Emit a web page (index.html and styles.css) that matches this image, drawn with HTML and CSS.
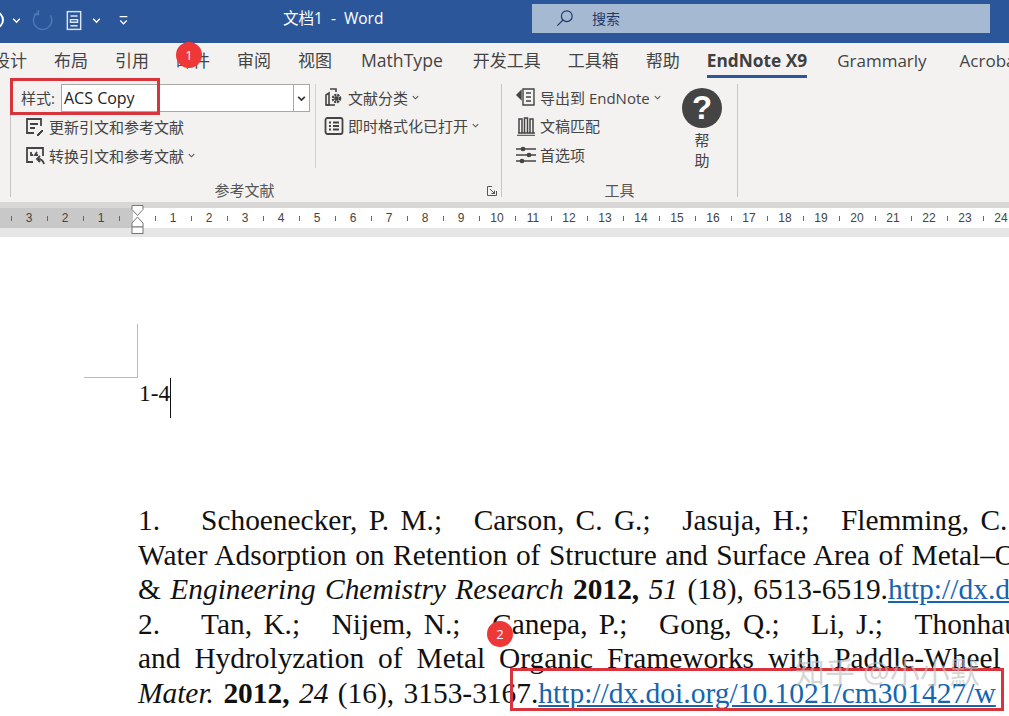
FILE: index.html
```html
<!DOCTYPE html>
<html lang="en">
<head>
    <meta charset="UTF-8">
    <title>文档1 - Word</title>
    <link rel="stylesheet" href="styles.css">
</head>
<body>
    <div class="titlebar">
        <div class="quick">
            <svg class="q-undo" viewBox="0 0 24 24" fill="none" stroke="#fff" stroke-width="2"><circle cx="3" cy="12" r="8"/></svg>
            <svg class="q-chev" viewBox="0 0 10 10" fill="none" stroke="#fff" stroke-width="1.3"><path d="M2 3.5l3 3 3-3"/></svg>
            <svg class="q-redo" viewBox="0 0 24 24" fill="none" stroke="#4f77b3" stroke-width="1.6"><path d="M7 3.5A10 10 0 1 0 20 7"/><path d="M7 1v5H2"/></svg>
            <svg class="q-page" viewBox="0 0 18 22" fill="none" stroke="#dbe5f3" stroke-width="1.6"><rect x="1.5" y="1" width="15" height="20"/><path d="M5 6h8M5 10h8v3H5zM5 17h8"/></svg>
            <svg class="q-chev q-chev-page" viewBox="0 0 10 10" fill="none" stroke="#fff" stroke-width="1.3"><path d="M2 3.5l3 3 3-3"/></svg>
            <svg class="q-more" viewBox="0 0 10 10" fill="none" stroke="#fff" stroke-width="1.1"><path d="M1.5 1.5h7M2 5l3 3 3-3"/></svg>
        </div>
        <div class="doc-title">文档1&nbsp; -&nbsp; Word</div>
        <div class="search">
            <svg class="search-icon" viewBox="0 0 20 20" fill="none" stroke="#1f3a68" stroke-width="1.3"><circle cx="12" cy="8" r="6"/><path d="M7.5 12.5L1.5 18.5"/></svg>
            <span>搜索</span>
        </div>
    </div>

    <div class="tabs">
        <span class="tab first">设计</span>
        <span class="tab">布局</span>
        <span class="tab">引用</span>
        <span class="tab">邮件</span>
        <span class="tab">审阅</span>
        <span class="tab">视图</span>
        <span class="tab mathtype">MathType</span>
        <span class="tab dev">开发工具</span>
        <span class="tab">工具箱</span>
        <span class="tab">帮助</span>
        <span class="tab active">EndNote X9</span>
        <span class="tab grammarly">Grammarly</span>
        <span class="tab acrobat">Acrobat</span>
    </div>

    <div class="ribbon">
        <div class="group refs">
            <div class="group-body">
                <div class="col col-style">
                    <div class="style-row">
                        <span class="style-label">样式:</span>
                        <div class="style-select">
                            <span class="style-value">ACS Copy</span>
                            <span class="style-arrow">
                                <svg viewBox="0 0 10 10" fill="none" stroke="#333" stroke-width="1.5"><path d="M2 3.5l3 3 3-3"/></svg>
                            </span>
                        </div>
                    </div>
                    <div class="cmd indent">
                        <svg class="icon" viewBox="0 0 20 20" fill="none" stroke="#444" stroke-width="1.8"><path d="M16 9V2H2v14h7"/><path d="M5 7h8M5 11h5"/><path d="M12 18l5-5 1 1-5 5z" fill="#444" stroke-width="1"/></svg>
                        <span>更新引文和参考文献</span>
                    </div>
                    <div class="cmd indent">
                        <svg class="icon" viewBox="0 0 20 20" fill="none" stroke="#444" stroke-width="1.8"><path d="M8 16H2V2h16v8"/><path d="M6 6v3h2M12 6l-2 3h3"/><path d="M19 18c-1-4-3-5-6-5M15 10l-3 3 3 3"/></svg>
                        <span>转换引文和参考文献</span>
                        <svg class="chev" viewBox="0 0 10 10" fill="none" stroke="#555" stroke-width="1.2"><path d="M2 3.5l3 3 3-3"/></svg>
                    </div>
                </div>
                <div class="col col-format">
                    <div class="cmd">
                        <svg class="icon" viewBox="0 0 20 20" fill="none" stroke="#444" stroke-width="1.6"><path d="M2 18V8l3-2v12zM6 2h6v3"/><circle cx="12.500" cy="11.500" r="3.500" stroke-width="2.600" stroke-dasharray="2 .8"/><circle cx="12.500" cy="11.500" r="1.400" fill="#444"/><path d="M2 18h9"/></svg>
                        <span>文献分类</span>
                        <svg class="chev" viewBox="0 0 10 10" fill="none" stroke="#555" stroke-width="1.2"><path d="M2 3.5l3 3 3-3"/></svg>
                    </div>
                    <div class="cmd">
                        <svg class="icon" viewBox="0 0 20 20" fill="none" stroke="#444" stroke-width="1.8"><rect x="1.5" y="2" width="17" height="16" rx="2"/><path d="M5 6.500h2M5 10h2M5 13.500h2M9 6.500h6M9 10h6M9 13.500h6"/></svg>
                        <span>即时格式化已打开</span>
                        <svg class="chev" viewBox="0 0 10 10" fill="none" stroke="#555" stroke-width="1.2"><path d="M2 3.5l3 3 3-3"/></svg>
                    </div>
                </div>
            </div>
            <div class="group-label">参考文献</div>
            <svg class="launcher" viewBox="0 0 10 10" fill="none" stroke="#555" stroke-width="1"><path d="M9.500 5v4.500H.5V.5H5M3 3l4.500 4.500M7.500 4.500v3h-3"/></svg>
        </div>

        <div class="group tools">
            <div class="group-body">
                <div class="col col-tools">
                    <div class="cmd">
                        <svg class="icon" viewBox="0 0 20 20" fill="none" stroke="#444" stroke-width="1.4"><path d="M7 2h11v16H7zM10 6h5M10 10h5M10 14h5"/><path d="M1 8l4-4v8z" fill="#444"/></svg>
                        <span>导出到 EndNote</span>
                        <svg class="chev" viewBox="0 0 10 10" fill="none" stroke="#555" stroke-width="1.2"><path d="M2 3.5l3 3 3-3"/></svg>
                    </div>
                    <div class="cmd">
                        <svg class="icon" viewBox="0 0 20 20" fill="none" stroke="#444" stroke-width="1.5"><path d="M2 17h17M3 17V3h3v14M8.500 17V2h3v15M14 17V3h3v14"/><path d="M1 19.300h18" stroke-width="1"/></svg>
                        <span>文稿匹配</span>
                    </div>
                    <div class="cmd">
                        <svg class="icon" viewBox="0 0 20 20" fill="none" stroke="#444" stroke-width="1.5"><path d="M0 4h20M0 10h20M0 16h20"/><circle cx="7" cy="4" r="1.6" fill="#444"/><circle cx="13" cy="10" r="1.6" fill="#444"/><circle cx="6" cy="16" r="1.6" fill="#444"/></svg>
                        <span>首选项</span>
                    </div>
                </div>
                <div class="help">
                    <div class="help-icon">?</div>
                    <div class="help-text">帮<br>助</div>
                </div>
            </div>
            <div class="group-label">工具</div>
        </div>
    </div>

    <div class="ruler-wrap">
        <div class="ruler">
            <span class="mark">3</span><span class="mark">2</span><span class="mark">1</span><span class="mark"></span>
            <span class="mark">1</span><span class="mark">2</span><span class="mark">3</span><span class="mark">4</span>
            <span class="mark">5</span><span class="mark">6</span><span class="mark">7</span><span class="mark">8</span>
            <span class="mark">9</span><span class="mark">10</span><span class="mark">11</span><span class="mark">12</span>
            <span class="mark">13</span><span class="mark">14</span><span class="mark">15</span><span class="mark">16</span>
            <span class="mark">17</span><span class="mark">18</span><span class="mark">19</span><span class="mark">20</span>
            <span class="mark">21</span><span class="mark">22</span><span class="mark">23</span><span class="mark">24</span>
        </div>
        <svg class="indent-marker" viewBox="0 0 13 32" fill="#fff" stroke="#777" stroke-width="1"><path d="M1 3.500h11v4l-5.500 6-5.500-6z"/><path d="M6.500 15l5.500 6v4H1v-4z"/><rect x="1" y="25" width="11" height="6.500"/></svg>
    </div>

    <div class="page">
        <div class="crop-mark"></div>
        <p class="typed">1-4<span class="cursor"></span></p>
        <div class="refs-list">
            <div class="line ws-names">1.<span class="gap-num"></span>Schoenecker, P. M.;<span class="gap"></span>Carson, C. G.;<span class="gap"></span>Jasuja, H.;<span class="gap"></span>Flemming, C.</div>
            <div class="line ws-plain">Water Adsorption on Retention of Structure and Surface Area of Metal–Organic</div>
            <div class="line ws-cite">&amp; <i>Engineering Chemistry Research</i> <b>2012,</b> <i>51</i> (18), 6513-6519.<a class="link">http://dx.doi.org</a></div>
            <div class="line ws-names">2.<span class="gap-num"></span>Tan, K.;<span class="gap"></span>Nijem, N.;<span class="gap"></span>Canepa, P.;<span class="gap"></span>Gong, Q.;<span class="gap"></span>Li, J.;<span class="gap"></span>Thonhauser</div>
            <div class="line ws-wide">and Hydrolyzation of Metal Organic Frameworks with Paddle-Wheel</div>
            <div class="line ws-cite"><i>Mater.</i> <b>2012,</b> <i>24</i> (16), 3153-3167.<a class="link">http://dx.doi.org/10.1021/cm301427/w</a></div>
        </div>
    </div>

    <div class="badge badge-one">1</div>
    <div class="badge badge-two">2</div>
    <div class="red-box box-style"></div>
    <div class="red-box box-link"></div>
    <div class="watermark">知乎 @小小默</div>
</body>
</html>
```

FILE: styles.css
```css
* {
    margin: 0;
    padding: 0;
    box-sizing: border-box;
}
html, body {
    width: 1009px;
    height: 716px;
    overflow: hidden;
}
body {
    position: relative;
    background: #fff;
    font-family: 'Open Sans', 'Noto Sans CJK SC', sans-serif;
    color: #444;
}

/* title bar */
.titlebar {
    height: 43px;
    background: #2b579a;
    display: flex;
    align-items: center;
    color: #fff;
}
.quick {
    width: 283px;
    display: flex;
    align-items: center;
    flex-shrink: 0;
    padding-bottom: 3px;
}
.q-undo { width: 24px; height: 24px; margin-left: -8px; margin-right: -5px; }
.q-chev { width: 11px; height: 11px; }
.q-redo { width: 22px; height: 22px; margin-left: 10px; }
.q-page { width: 16px; height: 21px; margin-left: 12px; }
.q-chev-page { margin-left: 9px; }
.q-more { width: 11px; height: 11px; margin-left: 16px; }
.doc-title {
    width: 249px;
    font-size: 15.5px;
    padding-bottom: 8px;
    flex-shrink: 0;
}
.search {
    width: 458px;
    height: 29px;
    margin-bottom: 7px;
    background: #a6b9d3;
    color: #1f3a68;
    display: flex;
    align-items: center;
    font-size: 14px;
}
.search-icon { width: 18px; height: 18px; margin-left: 24px; margin-right: 18px; }

/* tabs */
.tabs {
    height: 37px;
    background: #f3f2f1;
    display: flex;
    align-items: center;
    gap: 27px;
    font-size: 17px;
    white-space: nowrap;
    overflow: hidden;
}
.tab { flex-shrink: 0; position: relative; height: 37px; line-height: 35px; }
.tab.first { margin-left: -7px; }
.tab.mathtype { margin-left: 2px; font-size: 17.6px; }
.tab.dev { margin-left: 3px; }
.tab.grammarly { margin-left: 3px; }
.tab.acrobat { margin-left: 6px; }
.tab.active {
    font-weight: 700;
    color: #404040;
    font-size: 17.3px;
}
.tab.active::after {
    content: '';
    position: absolute;
    left: 0;
    right: 0;
    bottom: 2px;
    height: 3px;
    background: #2b579a;
}

/* ribbon */
.ribbon {
    height: 122px;
    background: #f3f2f1;
    display: flex;
    padding-left: 10px;
    padding-top: 4px;
    font-size: 15px;
}
.group {
    position: relative;
    display: flex;
    flex-direction: column;
    height: 113px;
    border-right: 1px solid #c8c6c4;
}
.group.refs { width: 492px; border-left: 1px solid #c8c6c4; }
.group.tools { width: 236px; }
.group-body { flex: 1; display: flex; }
.group-label {
    height: 14px;
    line-height: 14px;
    text-align: center;
    font-size: 15px;
    color: #555;
}
.refs .group-label { padding-right: 23px; }
.launcher {
    position: absolute;
    right: 4px;
    bottom: 1px;
    width: 10px;
    height: 10px;
}
.col { display: flex; flex-direction: column; }
.col-style {
    width: 305px;
    height: 84px;
    border-right: 1px solid #d2d0ce;
}
.style-row { display: flex; align-items: center; padding-left: 10px; height: 28px; flex-shrink: 0; }
.style-label { width: 40px; color: #444; padding-bottom: 2px; }
.style-select {
    width: 249px;
    height: 28px;
    background: #fff;
    border: 1px solid #aaa8a6;
    display: flex;
    align-items: center;
    justify-content: space-between;
}
.style-value { font-size: 16px; color: #222; padding-left: 2px; }
.style-arrow {
    width: 16px;
    height: 100%;
    border-left: 1px solid #aaa8a6;
    display: flex;
    align-items: center;
    justify-content: center;
}
.style-arrow svg { width: 11px; height: 11px; }
.cmd {
    display: flex;
    align-items: center;
    height: 29px;
    white-space: nowrap;
    flex-shrink: 0;
    color: #444;
}
.cmd .icon { width: 20px; height: 20px; margin-right: 4px; flex-shrink: 0; }
.cmd .chev { width: 9px; height: 9px; margin-left: 3px; }
.cmd.indent { padding-left: 14px; }
.col-format { width: 185px; padding-left: 8px; margin-top: -1px; }
.col-format .cmd:first-child { height: 28px; }
.col-tools { width: 179px; padding-left: 14px; margin-top: -1px; }
.col-tools .cmd:first-child { height: 28px; }
.help { width: 42px; display: flex; flex-direction: column; align-items: center; padding-top: 4px; }
.help-icon {
    width: 40px;
    height: 40px;
    border-radius: 50%;
    background: #444;
    color: #fff;
    font-family: 'Liberation Sans', sans-serif;
    font-weight: 700;
    font-size: 33px;
    line-height: 40px;
    text-align: center;
}
.help-text { font-size: 15px; line-height: 20px; text-align: center; margin-top: 2px; }

/* ruler */
.ruler-wrap {
    position: relative;
    height: 35px;
    background: #e6e6e6;
    border-top: 6px solid #d8d7d5;
}
.ruler {
    height: 20px;
    display: flex;
    padding-left: 11px;
    background: linear-gradient(to right, #c8c8c8 133px, #fff 133px);
    font-family: 'Liberation Sans', sans-serif;
    font-size: 12px;
    color: #444;
}
.mark {
    width: 36px;
    flex-shrink: 0;
    text-align: center;
    line-height: 20px;
    background: linear-gradient(#666, #666) no-repeat left center / 1px 5px;
}
.indent-marker {
    position: absolute;
    left: 131px;
    top: -6px;
    width: 13px;
    height: 32px;
}

/* document */
.page {
    height: 479px;
    padding-left: 139px;
    font-family: 'Liberation Serif', serif;
    color: #111;
}
.crop-mark {
    width: 54px;
    height: 54px;
    margin-left: -55px;
    border-right: 1px solid #bbb;
    border-bottom: 1px solid #bbb;
    position: relative;
    top: 87px;
}
.typed {
    font-size: 23.3px;
    margin-top: 87px;
    height: 42px;
    line-height: 30px;
    display: flex;
}
.cursor {
    width: 1px;
    height: 40px;
    background: #111;
}
.refs-list { margin-top: 83px; margin-left: -1px; font-size: 29.4px; }
.line { line-height: 34.6px; height: 34.6px; white-space: nowrap; }
.ws-names { word-spacing: 4px; }
.ws-plain { word-spacing: 1.2px; }
.ws-cite { word-spacing: 2.1px; }
.ws-wide { word-spacing: 6.6px; }
.gap { display: inline-block; width: 31.5px; }
.gap-num { display: inline-block; width: 41px; }
.link { color: #1565b0; text-decoration: underline; font-size: 29.5px; }

/* annotations on top of the screenshot */
.badge {
    position: absolute;
    width: 26px;
    height: 26px;
    border-radius: 50%;
    background: #ee3737;
    color: #fff;
    font-size: 13px;
    line-height: 26px;
    text-align: center;
}
.badge-one { left: 176px; top: 42px; }
.badge-two { left: 487px; top: 621px; }
.red-box {
    position: absolute;
    border: 3px solid #d8343b;
}
.box-style { left: 10px; top: 78px; width: 150px; height: 37px; }
.box-link { left: 510px; top: 668px; width: 494px; height: 43px; }
.watermark {
    position: absolute;
    left: 795px;
    top: 652px;
    font-size: 30px;
    line-height: 40px;
    color: rgba(190, 190, 190, 0.65);
    white-space: nowrap;
}
```
